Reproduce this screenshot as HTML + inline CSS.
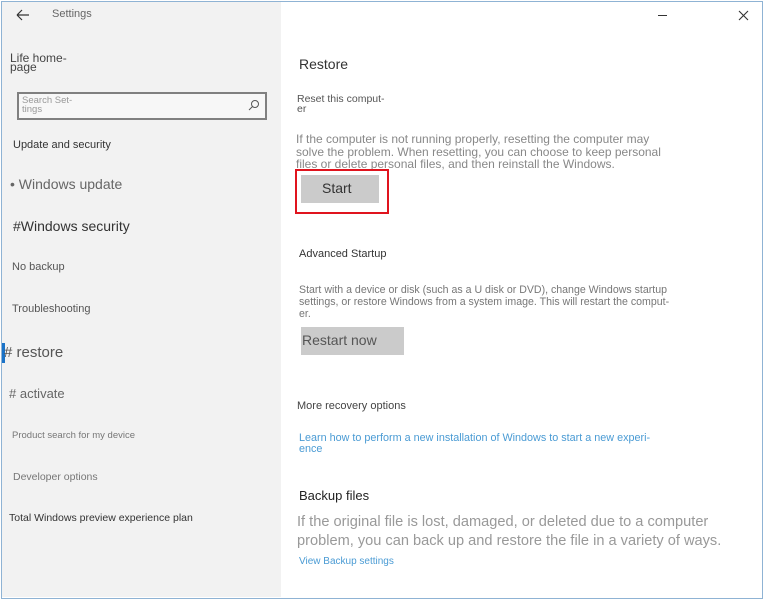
<!DOCTYPE html>
<html><head><style>
body{margin:0;width:766px;height:600px;overflow:hidden;background:#fff;font-family:"Liberation Sans",sans-serif;position:relative}
#win{position:absolute;left:1px;top:1px;width:760px;height:596px;border:1px solid #8fb3d4;background:#fff}
#side{position:absolute;left:2px;top:2px;width:279px;height:595px;background:#f2f2f2}
.t{position:absolute;white-space:nowrap;line-height:1}
</style></head><body>
<div id="win"></div>
<div id="side"></div>
<svg class="t" style="left:16px;top:9px" width="14" height="12"><path d="M1 6H13M1 6L6 1M1 6L6 11" stroke="#333" stroke-width="1.2" fill="none"/></svg>
<div class="t" style="left:52px;top:9px;font-size:11px;color:#666">Settings</div>
<div class="t" style="left:10px;top:54px;font-size:12px;color:#444;line-height:9px">Life home-<br>page</div>
<div style="position:absolute;left:17px;top:92px;width:246px;height:24px;border:2px solid #808080;background:#f7f7f7"></div>
<div class="t" style="left:22px;top:96px;font-size:9.5px;color:#999;line-height:9px">Search Set-<br>tings</div>
<svg class="t" style="left:248px;top:99px" width="12" height="12"><circle cx="7" cy="5" r="3.5" stroke="#555" fill="none"/><path d="M4.5 7.5L1 11" stroke="#555"/></svg>
<div class="t" style="left:13px;top:140px;font-size:11px;color:#333">Update and security</div>
<div class="t" style="left:10px;top:177px;font-size:14px;color:#666">• Windows update</div>
<div class="t" style="left:13px;top:219px;font-size:14px;color:#333">#Windows security</div>
<div class="t" style="left:12px;top:262px;font-size:11px;color:#555">No backup</div>
<div class="t" style="left:12px;top:304px;font-size:11px;color:#555">Troubleshooting</div>
<div style="position:absolute;left:2px;top:343px;width:3px;height:20px;background:#1a73c8"></div>
<div class="t" style="left:4px;top:345px;font-size:15px;color:#555">#&nbsp;restore</div>
<div class="t" style="left:9px;top:387px;font-size:13px;color:#666"># activate</div>
<div class="t" style="left:12px;top:431px;font-size:9.5px;color:#777">Product search for my device</div>
<div class="t" style="left:13px;top:472px;font-size:10.5px;color:#777">Developer options</div>
<div class="t" style="left:9px;top:513px;font-size:10.5px;color:#333">Total Windows preview experience plan</div>

<div style="position:absolute;left:658px;top:15px;width:9px;height:1px;background:#333"></div>
<svg class="t" style="left:738px;top:10px" width="11" height="11"><path d="M1 1L10 10M10 1L1 10" stroke="#333" stroke-width="1.1"/></svg>
<div class="t" style="left:299px;top:57px;font-size:14px;color:#333">Restore</div>
<div class="t" style="left:297px;top:94px;font-size:10.5px;color:#555;line-height:10px">Reset this comput-<br>er</div>
<div class="t" style="left:296px;top:133px;font-size:12px;color:#888;line-height:12.5px">If the computer is not running properly, resetting the computer may<br>solve the problem. When resetting, you can choose to keep personal<br>files or delete personal files, and then reinstall the Windows.</div>
<div style="position:absolute;left:295px;top:169px;width:90px;height:41px;border:2px solid #e0141e;background:#fff"></div>
<div style="position:absolute;left:301px;top:175px;width:78px;height:28px;background:#cbcbcb"></div>
<div class="t" style="left:322px;top:181px;font-size:14px;color:#333">Start</div>
<div class="t" style="left:299px;top:249px;font-size:11px;color:#333">Advanced Startup</div>
<div class="t" style="left:299px;top:284px;font-size:10.6px;color:#777;line-height:12px">Start with a device or disk (such as a U disk or DVD), change Windows startup<br>settings, or restore Windows from a system image. This will restart the comput-<br>er.</div>
<div style="position:absolute;left:301px;top:327px;width:103px;height:28px;background:#cbcbcb"></div>
<div class="t" style="left:302px;top:333px;font-size:14px;color:#555">Restart now</div>
<div class="t" style="left:297px;top:401px;font-size:11px;color:#444">More recovery options</div>
<div class="t" style="left:299px;top:433px;font-size:10.8px;color:#4a9bd4;line-height:11px">Learn how to perform a new installation of Windows to start a new experi-<br>ence</div>
<div class="t" style="left:299px;top:489px;font-size:13px;color:#222">Backup files</div>
<div class="t" style="left:297px;top:513px;font-size:14.6px;color:#999;line-height:19px">If the original file is lost, damaged, or deleted due to a computer<br>problem, you can back up and restore the file in a variety of ways.</div>
<div class="t" style="left:299px;top:557px;font-size:10px;color:#4a9bd4">View Backup settings</div>
</body></html>
